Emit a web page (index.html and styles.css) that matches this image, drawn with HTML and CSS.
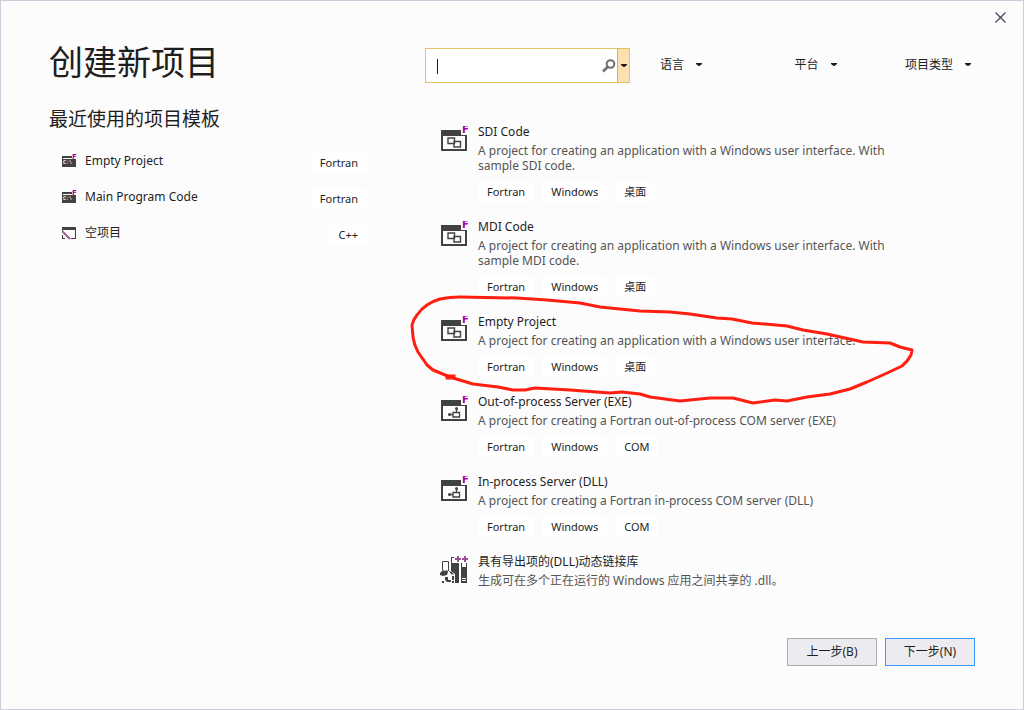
FILE: index.html
```html
<!DOCTYPE html>
<html lang="zh-CN">
<head>
  <meta charset="UTF-8" />
  <meta name="viewport" content="width=device-width, initial-scale=1.0"/>
  <title>创建新项目</title>
  <link rel="stylesheet" href="styles.css">
</head>
<body>

<!-- Shared icons -->
<svg class="sprite" aria-hidden="true">
  <symbol id="icon-frame" viewBox="0 0 28 26">
    <path fill="#424242" d="M0 4h20v5h6v16H0zM2 10v13h22V10z" fill-rule="evenodd"/>
    <path fill="#424242" d="M0 4h20v6H0z"/>
    <text x="21" y="7" class="icon-letter">F</text>
  </symbol>
  <symbol id="icon-windows" viewBox="0 0 28 26">
    <use href="#icon-frame" width="28" height="26"/>
    <path fill="#fcfcfc" stroke="#424242" stroke-width="1.4" d="M7 12h6.500v5.500H7zM13 15.500h6.500v5.500H13z"/>
  </symbol>
  <symbol id="icon-server" viewBox="0 0 28 26">
    <use href="#icon-frame" width="28" height="26"/>
    <path fill="none" stroke="#424242" stroke-width="1.3" d="M12 16.500h6.500v4.500H12zM15.500 16v-3M12 18.500H8.500"/>
    <circle cx="15.500" cy="12.500" r="1.500" fill="#424242"/>
    <circle cx="8.500" cy="18.500" r="1.500" fill="#424242"/>
  </symbol>
  <symbol id="icon-console" viewBox="0 0 15 14">
    <path fill="#424242" d="M0 2h10v3h4v8H0z"/>
    <path stroke="#fcfcfc" d="M1 4.500h9"/>
    <text x="1" y="10" class="icon-prompt">C:\</text>
    <text x="10" y="5" class="icon-letter small">F</text>
  </symbol>
  <symbol id="icon-empty" viewBox="0 0 15 14">
    <path fill="#424242" d="M0 1h14v12H9v-1h4V4H1v1H0z"/>
    <path stroke="#a05a9c" stroke-width="2" d="M0 5l8 8"/>
    <path stroke="#424242" d="M.5 9v4M0 12.500h3"/>
  </symbol>
  <symbol id="icon-caret" viewBox="0 0 6 4">
    <path fill="#1e1e1e" d="M0 0h6v1L3.500 3h-1L0 1z"/>
  </symbol>
</svg>

<div class="dialog">
  <div class="titlebar">
    <button class="close" type="button" aria-label="关闭">
      <svg width="11" height="11" viewBox="0 0 11 11"><path fill="none" stroke="#3c4257" stroke-width="1.2" d="M.5.5l10 10M10.500.5l-10 10"/></svg>
    </button>
  </div>

  <main class="content">
    <section class="recent">
      <h1>创建新项目</h1>
      <h2>最近使用的项目模板</h2>
      <ul class="recent-list">
        <li>
          <svg class="recent-icon"><use href="#icon-console"/></svg>
          <span class="recent-name">Empty Project</span>
          <span class="tag">Fortran</span>
        </li>
        <li>
          <svg class="recent-icon"><use href="#icon-console"/></svg>
          <span class="recent-name">Main Program Code</span>
          <span class="tag">Fortran</span>
        </li>
        <li>
          <svg class="recent-icon"><use href="#icon-empty"/></svg>
          <span class="recent-name">空项目</span>
          <span class="tag">C++</span>
        </li>
      </ul>
    </section>

    <section class="browse">
      <div class="toolbar">
        <div class="search">
          <input type="text" aria-label="搜索模板" />
          <svg class="search-icon" width="14" height="14" viewBox="0 0 14 14"><circle cx="8.500" cy="5" r="3.800" fill="none" stroke="#717171" stroke-width="2"/><path stroke="#717171" stroke-width="2.600" d="M6 7.500L1 12.500"/></svg>
          <button class="search-more" type="button" aria-label="搜索选项"><svg class="caret"><use href="#icon-caret"/></svg></button>
        </div>
        <div class="filters">
          <div class="filter">
            <select aria-label="语言"><option>语言</option></select>
            <svg class="caret"><use href="#icon-caret"/></svg>
          </div>
          <div class="filter">
            <select aria-label="平台"><option>平台</option></select>
            <svg class="caret"><use href="#icon-caret"/></svg>
          </div>
          <div class="filter">
            <select aria-label="项目类型"><option>项目类型</option></select>
            <svg class="caret"><use href="#icon-caret"/></svg>
          </div>
        </div>
      </div>

      <ul class="templates">
        <li class="template">
          <svg class="template-icon"><use href="#icon-windows"/></svg>
          <div class="template-body">
            <h3>SDI Code</h3>
            <p>A project for creating an application with a Windows user interface. With sample SDI code.</p>
            <div class="tags"><span class="tag">Fortran</span><span class="tag">Windows</span><span class="tag">桌面</span></div>
          </div>
        </li>
        <li class="template">
          <svg class="template-icon"><use href="#icon-windows"/></svg>
          <div class="template-body">
            <h3>MDI Code</h3>
            <p>A project for creating an application with a Windows user interface. With sample MDI code.</p>
            <div class="tags"><span class="tag">Fortran</span><span class="tag">Windows</span><span class="tag">桌面</span></div>
          </div>
        </li>
        <li class="template">
          <svg class="template-icon"><use href="#icon-windows"/></svg>
          <div class="template-body">
            <h3>Empty Project</h3>
            <p>A project for creating an application with a Windows user interface.</p>
            <div class="tags"><span class="tag">Fortran</span><span class="tag">Windows</span><span class="tag">桌面</span></div>
          </div>
          <!-- Hand-drawn marker around this template -->
          <svg class="marker" width="515" height="120" viewBox="405 290 515 120" aria-hidden="true">
            <path d="M450 377L433 370 427 365 418 352Q414 345 413 337L412 325Q413 320 417 315 421 309 427 305 433 301 440 299 450 297 460 297L517 298 547 300 580 303 600 307 640 311 670 312 690 314 717 318 732 319 752 323 787 326 803 330 827 334 863 342 890 343 900 347 912 350 911 355Q908 361 902 366L885 374 867 382 850 389 830 394 807 397 787 401 775 400 753 403 733 398 710 398 680 401 650 397 640 394 622 392 610 393 570 390 535 388 525 390 513 390 498 387 473 384 453 378"/>
            <path d="M448 377h5" class="marker-dot"/>
          </svg>
        </li>
        <li class="template">
          <svg class="template-icon"><use href="#icon-server"/></svg>
          <div class="template-body">
            <h3>Out-of-process Server (EXE)</h3>
            <p>A project for creating a Fortran out-of-process COM server (EXE)</p>
            <div class="tags"><span class="tag">Fortran</span><span class="tag">Windows</span><span class="tag">COM</span></div>
          </div>
        </li>
        <li class="template">
          <svg class="template-icon"><use href="#icon-server"/></svg>
          <div class="template-body">
            <h3>In-process Server (DLL)</h3>
            <p>A project for creating a Fortran in-process COM server (DLL)</p>
            <div class="tags"><span class="tag">Fortran</span><span class="tag">Windows</span><span class="tag">COM</span></div>
          </div>
        </li>
        <li class="template">
          <svg class="template-icon tall" viewBox="0 0 28 28">
            <path fill="none" stroke="#424242" d="M1.500 14V5.500h6V15"/>
            <path fill="#424242" d="M10 1h3v1h-2v5h7v20h-4v-9l-4-3zM20 7h1v4h4V7h1v20h-6z"/>
            <path stroke="#fcfcfc" d="M21 22.500h4M21 24.500h4"/>
            <path stroke="#9b4f96" stroke-width="2" d="M14 3h6M17 0v6M21 3h6M24 0v6"/>
            <path fill="#424242" d="M-1 17l3-3 2 1 2-1 1 2-1 3-4 1-3-1zM8 15l3 1 2 3-3-1zM11 20h2v4h-2zM1 25h2v2H1zM4 21h3v3h3v2H6l-2-2zM11 25h2v2h-2z"/>
          </svg>
          <div class="template-body">
            <h3>具有导出项的(DLL)动态链接库</h3>
            <p>生成可在多个正在运行的 Windows 应用之间共享的 .dll。</p>
          </div>
        </li>
      </ul>
    </section>
  </main>

  <footer>
    <button class="btn" type="button">上一步(B)</button>
    <button class="btn primary" type="button">下一步(N)</button>
  </footer>
</div>

</body>
</html>
```
FILE: styles.css
```css
* {
  box-sizing: border-box;
}

body {
  margin: 0;
  font-family: 'Noto Sans', 'Noto Sans CJK SC', sans-serif;
  font-size: 12px;
  color: #1e1e1e;
  background: #fcfcfc;
}

h1, h2, h3, p, ul {
  margin: 0;
  padding: 0;
  font-weight: normal;
}

ul {
  list-style: none;
}

svg {
  display: block;
  flex: none;
}

button, input, select {
  font: inherit;
  color: inherit;
}

.sprite {
  display: none;
}

.icon-letter {
  font: bold 10px 'DejaVu Sans', sans-serif;
  fill: #a6009c;
}

.icon-letter.small {
  font-size: 7px;
}

.icon-prompt {
  font: bold 5px 'Liberation Mono', monospace;
  fill: #fcfcfc;
}

.dialog {
  display: flex;
  flex-direction: column;
  min-height: 100vh;
  border: 1px solid #ccccdb;
}

/* Title bar */
.titlebar {
  display: flex;
  justify-content: flex-end;
  height: 32px;
  padding-right: 12px;
}

.close {
  display: flex;
  align-items: center;
  justify-content: center;
  width: 22px;
  padding: 0;
  border: none;
  background: none;
}

.content {
  display: grid;
  grid-template-columns: 318px 1fr;
  gap: 58px;
  padding: 0 48px;
}

/* Recent templates */
.recent {
  padding-top: 4px;
}

h1 {
  font-size: 34px;
  line-height: 50px;
}

h2 {
  margin-top: 18px;
  font-size: 19px;
  line-height: 28px;
}

.recent-list {
  padding: 10px 0 0 13px;
}

.recent-list li {
  display: flex;
  align-items: center;
  height: 36px;
}

.recent-icon {
  width: 15px;
  height: 14px;
  margin-right: 8px;
}

.recent-name {
  flex: 1;
  padding-bottom: 2px;
}

.recent-list .tag {
  margin-top: 4px;
}

.tag {
  padding: 0 9px;
  border-radius: 4px;
  background: #fff;
  font-size: 11px;
  line-height: 20px;
}

/* Search and filters */
.browse {
  padding-top: 15px;
}

.toolbar {
  display: flex;
  align-items: center;
}

.search {
  display: flex;
  align-items: center;
  width: 205px;
  height: 35px;
  border: 1px solid #e5c365;
  background: #fff;
}

.search input {
  flex: 1;
  min-width: 0;
  height: 33px;
  padding: 0 12px;
  border: none;
  outline: none;
  background: linear-gradient(#1e1e1e, #1e1e1e) no-repeat 11px 10px / 1px 15px;
}

.search-icon {
  margin-right: 1px;
}

.search-more {
  display: flex;
  align-items: center;
  justify-content: center;
  width: 12px;
  height: 33px;
  padding: 0;
  border: none;
  border-left: 1px solid #e5a860;
  background: #fde0b0;
}

.caret {
  width: 6px;
  height: 4px;
}

.filters {
  flex: 1;
  display: grid;
  grid-template-columns: auto 1fr 1fr;
  justify-items: end;
  padding: 0 4px 2px 30px;
}

.filter {
  display: flex;
  align-items: center;
  gap: 11px;
}

.filter select {
  padding: 0;
  border: none;
  background: none;
  appearance: none;
}

/* Template list */
.templates {
  padding: 39px 0 0 16px;
}

.template {
  position: relative;
  display: flex;
  gap: 9px;
  padding-bottom: 15px;
}

.template-icon {
  width: 28px;
  height: 26px;
  margin-top: 4px;
}

.template-icon.tall {
  height: 28px;
  overflow: visible;
}

.template h3 {
  font-size: 12px;
  line-height: 20px;
}

.template p {
  max-width: 440px;
  margin-top: 1px;
  color: #555;
  line-height: 15px;
}

.tags {
  display: flex;
  gap: 8px;
  margin-top: 9px;
}

.marker {
  position: absolute;
  top: -22px;
  left: -36px;
  z-index: 1;
  fill: none;
  stroke: #ff1e10;
  stroke-width: 3;
  stroke-linejoin: round;
  stroke-linecap: round;
  pointer-events: none;
}

.marker-dot {
  stroke-width: 5;
  stroke-linecap: square;
}

/* Buttons */
footer {
  display: flex;
  justify-content: flex-end;
  gap: 8px;
  margin-top: auto;
  padding: 0 48px 43px;
}

.btn {
  width: 90px;
  height: 28px;
  padding: 0 0 2px;
  border: 1px solid #acacac;
  background: #ececf0;
}

.btn.primary {
  border-color: #3399ff;
}
```
